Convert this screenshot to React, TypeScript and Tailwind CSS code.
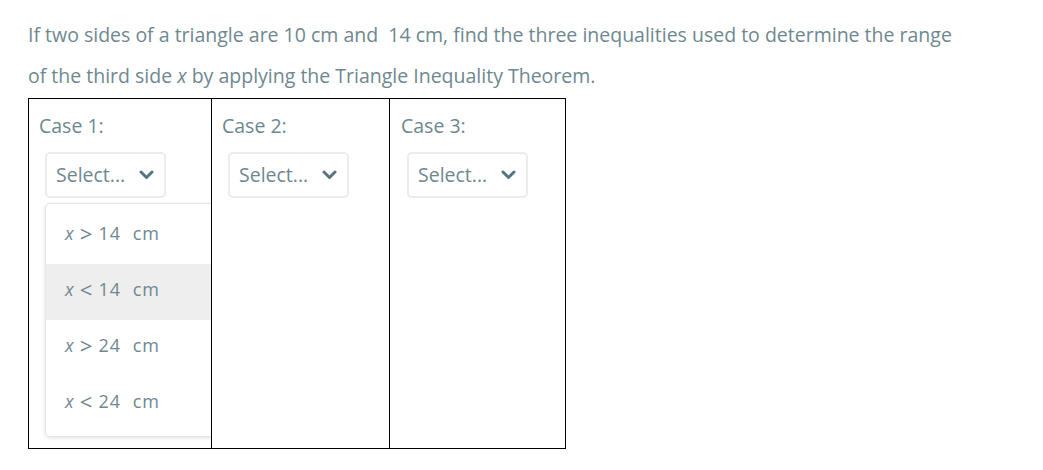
const options = [
  { op: '>', value: '14 cm' },
  { op: '<', value: '14 cm', active: true },
  { op: '>', value: '24 cm' },
  { op: '<', value: '24 cm' },
];

function Chevron() {
  return (
    <svg width="15" height="10" viewBox="0 0 15 10" className="text-[#56737e]">
      <path d="M2 2l5.5 5.5L13 2" fill="none" stroke="currentColor" strokeWidth="3" strokeLinecap="round" strokeLinejoin="round" />
    </svg>
  );
}

function SelectBox() {
  return (
    <div className="ml-[6px] mt-[12px] flex h-[46px] w-[121px] items-center rounded-[5px] border-2 border-[#ececec] pl-[9px] text-[19.5px]">
      <span>Select...</span>
      <span className="ml-[14px] flex">
        <Chevron />
      </span>
    </div>
  );
}

function Menu() {
  return (
    <div className="ml-[6px] mt-[5px] w-[200px] rounded-l-[5px] border border-[#e6e6e6] bg-white py-[4px] shadow-[0_1px_4px_rgba(0,0,0,0.12)]">
      {options.map((o, i) => (
        <div
          key={i}
          className={`flex h-[56px] items-center pb-[6px] pl-[19px] text-[18px] tracking-[0.06em] ${o.active ? 'bg-[#eeeeee]' : ''}`}
        >
          <span className="italic">x</span>
          <span className="mx-[5px] text-[22px] leading-none">{o.op}</span>
          <span className="whitespace-pre">{o.value.replace(' ', '  ')}</span>
        </div>
      ))}
    </div>
  );
}

export default function App() {
  return (
    <div
      className="min-h-[470px] bg-white pl-[28px] pt-[14px] text-[#6e8890]"
      style={{ fontFamily: '"Open Sans", "Noto Sans", sans-serif' }}
    >
      <p className="text-[19.5px] leading-[41px]">
        If two sides of a triangle are 10 cm and&nbsp; 14 cm, find the three inequalities used to determine the range
        <br />
        of the third side <span className="italic">x</span> by applying the Triangle Inequality Theorem.
      </p>
      <div className="mt-[2px] flex h-[351px] w-[538px] border border-black">
        <div className="w-[183px] overflow-hidden border-r border-black px-[10px] pt-[13px]">
          <div className="text-[19.5px] leading-[28px]">Case 1:</div>
          <SelectBox />
          <Menu />
        </div>
        <div className="w-[178px] border-r border-black px-[10px] pt-[13px]">
          <div className="text-[19.5px] leading-[28px]">Case 2:</div>
          <SelectBox />
        </div>
        <div className="flex-1 px-[11px] pt-[13px]">
          <div className="text-[19.5px] leading-[28px]">Case 3:</div>
          <SelectBox />
        </div>
      </div>
    </div>
  );
}
